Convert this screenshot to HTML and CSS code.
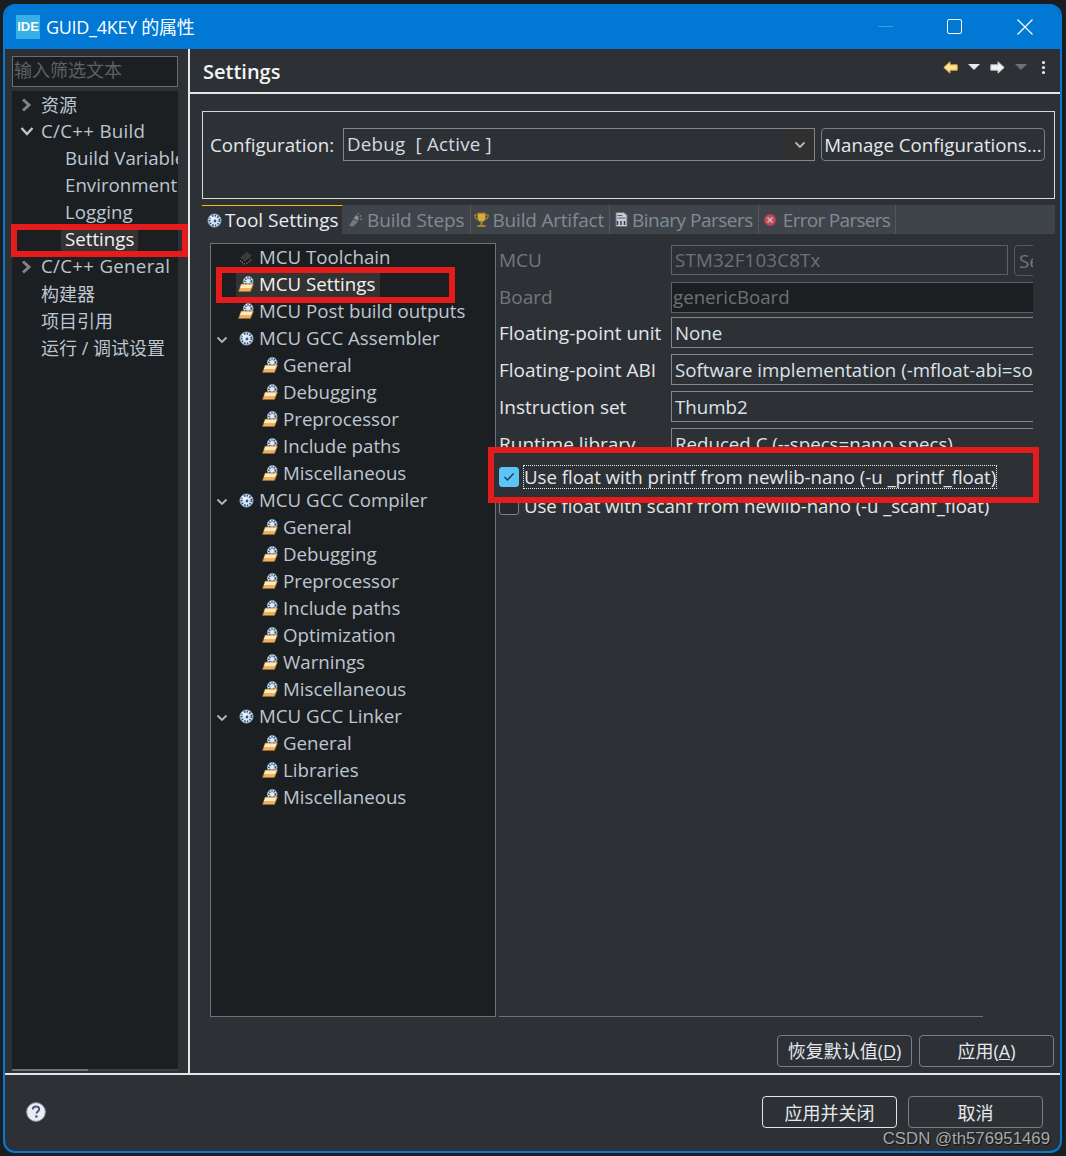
FILE: index.html
```html
<!DOCTYPE html>
<html lang="zh">
<head>
<meta charset="utf-8">
<title>GUID_4KEY 的属性</title>
<link rel="stylesheet" href="styles.css">
</head>
<body>
<svg class="defs" width="0" height="0">
  <defs>
    <symbol id="gear" viewBox="0 0 16 16">
      <circle cx="8" cy="8" r="7" fill="#dbe6f1" stroke="#7f9dba"/>
      <circle cx="8" cy="8" r="5.200" fill="none" stroke="#34557f" stroke-width="2" stroke-dasharray="1.600 1.400"/>
      <path d="M3.500 3.500l4.500 4.500" stroke="#f6f9fc" stroke-width="2"/>
      <circle cx="8.500" cy="8.500" r="1.500" fill="#34557f"/>
    </symbol>
    <symbol id="folder" viewBox="0 0 18 18">
      <circle cx="11.500" cy="6" r="5.500" fill="#e3ecf5" stroke="#86a3c0" stroke-width=".7"/>
      <circle cx="11.500" cy="6" r="3.600" fill="none" stroke="#34557f" stroke-width="2.200" stroke-dasharray="1.400 1.200"/>
      <path d="M3.500 9h14l-3.500 8.500H.6z" fill="#eeb160" stroke="#a3722f" stroke-width=".6"/>
      <path d="M3.800 9.800h12.600l-1.700 3.700H2.300z" fill="#fdeac2"/>
    </symbol>
    <symbol id="chip" viewBox="0 0 18 18">
      <path d="M2 10 10 3l6 5-8 7z" fill="#3a3a3a"/>
      <path d="M2 10v2l6 5v-2zM8 17l8-7V8l-8 7z" fill="#0c0c0c"/>
      <path d="M3 12.500v2M5 14v2M7 15.500v2M10 15v2M12.500 13v2M14.500 11v2" stroke="#8f8f8f"/>
    </symbol>
    <symbol id="chev-r" viewBox="0 0 12 14">
      <path d="M3 1.500 9 7l-6 5.500" fill="none" stroke="#7f8387" stroke-width="3"/>
    </symbol>
    <symbol id="chev-d" viewBox="0 0 14 12">
      <path d="M1.500 3 7 9l5.500-6" fill="none" stroke="#c4c7ca" stroke-width="2.400"/>
    </symbol>
    <symbol id="chev-s" viewBox="0 0 12 10">
      <path d="M1.500 2.500 6 7l4.500-4.500" fill="none" stroke="#b4b8bc" stroke-width="1.800"/>
    </symbol>
  </defs>
</svg>

<div class="window">
  <header class="titlebar">
    <span class="appicon">IDE</span>
    <span class="title">GUID_4KEY 的属性</span>
    <span class="wincontrols">
      <span class="wc-min"></span>
      <span class="wc-max"></span>
      <svg class="wc-close" width="16" height="16" viewBox="0 0 16 16"><path d="M.5.500l15 15M15.500.500l-15 15" stroke="#fff" stroke-width="1.200"/></svg>
    </span>
  </header>

  <div class="main">
    <aside class="nav">
      <div class="filter">输入筛选文本</div>
      <ul class="navtree">
        <li class="nav-row nav-zh"><svg class="twist" width="12" height="14"><use href="#chev-r"/></svg>资源</li>
        <li class="nav-row nav-cpp"><svg class="twist" width="14" height="12"><use href="#chev-d"/></svg>C/C++ Build</li>
        <li class="nav-row nav-child">Build Variables</li>
        <li class="nav-row nav-child">Environment</li>
        <li class="nav-row nav-child">Logging</li>
        <li class="nav-row nav-child nav-sel"><span>Settings</span></li>
        <li class="nav-row nav-cpp"><svg class="twist" width="12" height="14"><use href="#chev-r"/></svg>C/C++ General</li>
        <li class="nav-row nav-zh">构建器</li>
        <li class="nav-row nav-zh">项目引用</li>
        <li class="nav-row nav-zh">运行 / 调试设置</li>
      </ul>
      <div class="nav-scroll"></div>
    </aside>

    <section class="content">
      <div class="page-head">
        <h1 class="page-title">Settings</h1>
        <div class="head-tools">
          <svg width="15" height="13" viewBox="0 0 15 13"><path d="M.8 6.500 7 .8v3h7.200v5.400H7v3z" fill="#fbe3a0" stroke="#e8a92a"/></svg>
          <span class="tri tri-on"></span>
          <svg width="15" height="13" viewBox="0 0 15 13"><path d="M14.200 6.500 8 .8v3H.8v5.400H8v3z" fill="#f2f2f2" stroke="#c4c4c4"/></svg>
          <span class="tri tri-off"></span>
          <span class="dots"><i></i><i></i><i></i></span>
        </div>
      </div>

      <div class="page-body">
        <div class="config">
          <label class="config-label">Configuration:</label>
          <div class="combo"><span class="combo-text">Debug&nbsp; [ Active ]</span><span class="combo-btn"><svg width="12" height="10"><use href="#chev-s"/></svg></span></div>
          <button class="btn btn-manage">Manage Configurations...</button>
        </div>

        <nav class="tabs">
          <span class="tab tab-on"><svg width="15" height="15"><use href="#gear"/></svg>Tool Settings</span>
          <span class="tab tab-steps"><svg width="16" height="15" viewBox="0 0 16 15"><path d="M1 14 5 7.500l5 2.500-5 4.500z" fill="#737a82"/><path d="M5.500 6.500 8 3l3 2 -1 4zM9 2l1.300-.8.7 1-1.300.8zM11.500 4l1.300-1 .7 1-1.300 1zM12 7l2-.5.300 1-2 .5z" fill="#868d94"/></svg>Build Steps</span>
          <span class="tab tab-art"><svg width="15" height="16" viewBox="0 0 15 16"><path d="M3.500 1h8v5c0 3-2 4-4 4s-4-1-4-4z" fill="#d3a94a" stroke="#8a6a20"/><path d="M3.500 3H.8c0 3 1 4 3 4M11.500 3h2.700c0 3-1 4-3 4" fill="none" stroke="#b08a30" stroke-width="1.200"/><path d="M6.500 10h2v3h-2zM3.500 13h8v2h-8z" fill="#a58430"/></svg>Build Artifact</span>
          <span class="tab tab-bin"><svg width="13" height="15" viewBox="0 0 13 15"><path d="M1 .5h8l3 3V14.500H1z" fill="#c9ccd0" stroke="#6e7276"/><path d="M2.500 3.500h5M2.500 6h8" stroke="#5c6064"/><path d="M2.500 9v4M6 9v4M9.500 9v4" stroke="#1f3f6e" stroke-width="1.500"/></svg>Binary Parsers</span>
          <span class="tab tab-err"><svg width="14" height="14" viewBox="0 0 14 14"><circle cx="7" cy="7" r="6" fill="#b9505d" stroke="#8d3340"/><path d="M4.500 4.500l5 5M9.500 4.500l-5 5" stroke="#ddb7bc" stroke-width="1.400"/></svg>Error Parsers</span>
          <span class="tabs-fill"></span>
        </nav>

        <div class="tab-panel">
          <ul class="tool-tree">
            <li class="t-row t-l1"><svg class="t-ico" width="16" height="16"><use href="#chip"/></svg>MCU Toolchain</li>
            <li class="t-row t-l1 t-sel"><span class="t-selbox"><svg class="t-ico" width="16" height="16"><use href="#folder"/></svg>MCU Settings</span></li>
            <li class="t-row t-l1"><svg class="t-ico" width="16" height="16"><use href="#folder"/></svg>MCU Post build outputs</li>
            <li class="t-row"><svg class="t-twist" width="12" height="10"><use href="#chev-s"/></svg><svg class="t-gear" width="15" height="15"><use href="#gear"/></svg>MCU GCC Assembler</li>
            <li class="t-row t-l2"><svg class="t-ico" width="16" height="16"><use href="#folder"/></svg>General</li>
            <li class="t-row t-l2"><svg class="t-ico" width="16" height="16"><use href="#folder"/></svg>Debugging</li>
            <li class="t-row t-l2"><svg class="t-ico" width="16" height="16"><use href="#folder"/></svg>Preprocessor</li>
            <li class="t-row t-l2"><svg class="t-ico" width="16" height="16"><use href="#folder"/></svg>Include paths</li>
            <li class="t-row t-l2"><svg class="t-ico" width="16" height="16"><use href="#folder"/></svg>Miscellaneous</li>
            <li class="t-row"><svg class="t-twist" width="12" height="10"><use href="#chev-s"/></svg><svg class="t-gear" width="15" height="15"><use href="#gear"/></svg>MCU GCC Compiler</li>
            <li class="t-row t-l2"><svg class="t-ico" width="16" height="16"><use href="#folder"/></svg>General</li>
            <li class="t-row t-l2"><svg class="t-ico" width="16" height="16"><use href="#folder"/></svg>Debugging</li>
            <li class="t-row t-l2"><svg class="t-ico" width="16" height="16"><use href="#folder"/></svg>Preprocessor</li>
            <li class="t-row t-l2"><svg class="t-ico" width="16" height="16"><use href="#folder"/></svg>Include paths</li>
            <li class="t-row t-l2"><svg class="t-ico" width="16" height="16"><use href="#folder"/></svg>Optimization</li>
            <li class="t-row t-l2"><svg class="t-ico" width="16" height="16"><use href="#folder"/></svg>Warnings</li>
            <li class="t-row t-l2"><svg class="t-ico" width="16" height="16"><use href="#folder"/></svg>Miscellaneous</li>
            <li class="t-row"><svg class="t-twist" width="12" height="10"><use href="#chev-s"/></svg><svg class="t-gear" width="15" height="15"><use href="#gear"/></svg>MCU GCC Linker</li>
            <li class="t-row t-l2"><svg class="t-ico" width="16" height="16"><use href="#folder"/></svg>General</li>
            <li class="t-row t-l2"><svg class="t-ico" width="16" height="16"><use href="#folder"/></svg>Libraries</li>
            <li class="t-row t-l2"><svg class="t-ico" width="16" height="16"><use href="#folder"/></svg>Miscellaneous</li>
          </ul>

          <div class="form-pane">
            <div class="form">
              <div class="f-row">
                <span class="f-label f-dis">MCU</span>
                <span class="f-field f-short f-dis">STM32F103C8Tx</span>
                <span class="f-select">Se</span>
              </div>
              <div class="f-row f-board"><span class="f-label f-dis">Board</span><span class="f-field f-dark f-dis">genericBoard</span></div>
              <div class="f-row"><span class="f-label">Floating-point unit</span><span class="f-field">None</span></div>
              <div class="f-row"><span class="f-label">Floating-point ABI</span><span class="f-field">Software implementation (-mfloat-abi=soft)</span></div>
              <div class="f-row"><span class="f-label">Instruction set</span><span class="f-field">Thumb2</span></div>
              <div class="f-row"><span class="f-label">Runtime library</span><span class="f-field">Reduced C (--specs=nano.specs)</span></div>
              <div class="c-row c-scanf"><span class="cbox"></span><span class="c-text">Use float with scanf from newlib-nano (-u _scanf_float)</span></div>
            </div>
            <div class="form-rule"></div>
          </div>
        </div>

        <div class="page-actions">
          <button class="btn btn-act">恢复默认值(<u>D</u>)</button>
          <button class="btn btn-act">应用(<u>A</u>)</button>
        </div>
      </div>
    </section>
  </div>

  <footer class="footer">
    <svg class="help" width="20" height="20" viewBox="0 0 20 20"><circle cx="10" cy="10" r="9.300" fill="#e9edf3" stroke="#9aa5b8"/><path d="M6.800 7.500C6.800 5.500 8.300 4.500 10 4.500s3.200 1 3.200 2.800c0 2.200-2.700 2.300-2.700 4.200" fill="none" stroke="#47597f" stroke-width="2"/><circle cx="10.400" cy="14.500" r="1.300" fill="#47597f"/></svg>
    <div class="footer-btns">
      <button class="btn btn-foot btn-default">应用并关闭</button>
      <button class="btn btn-foot">取消</button>
    </div>
  </footer>

  <div class="mark mark-nav"></div>
  <div class="mark mark-tool"></div>
  <div class="mark mark-check">
    <div class="c-row"><span class="cbox cbox-on"><svg width="12" height="10" viewBox="0 0 12 10"><path d="M1.500 5 4.500 8l6-6.500" fill="none" stroke="#0f3a55" stroke-width="1.300"/></svg></span><span class="c-text c-focus">Use float with printf from newlib-nano (-u _printf_float)</span></div>
  </div>
  <div class="watermark">CSDN @th576951469</div>
</div>
</body>
</html>
```

FILE: styles.css
```css
* { box-sizing: border-box; }
html, body { margin: 0; padding: 0; }
body {
  width: 1066px;
  height: 1156px;
  overflow: hidden;
  background: #1b1e21;
  padding: 4px 4px 3px 3px;
  font-family: "Open Sans", "Noto Sans CJK SC", sans-serif;
  font-size: 18.7px;
  color: #bcc6d0;
}
.defs { position: absolute; }
ul { list-style: none; margin: 0; padding: 0; }

.window {
  position: relative;
  width: 1059px;
  height: 1149px;
  display: flex;
  flex-direction: column;
  background: #2d3135;
  border: 2px solid #0878d2;
  border-top: 0;
  border-radius: 12px;
  overflow: hidden;
}

.titlebar {
  height: 45px;
  flex: none;
  display: flex;
  align-items: center;
  background: #0078d4;
  color: #fff;
  padding-left: 11px;
}
.appicon {
  width: 24px;
  height: 24px;
  background: #37aee6;
  color: #fff;
  font: bold 13px/24px "Liberation Sans", sans-serif;
  text-align: center;
}
.title { margin: -2px 0 0 6px; font-size: 18px; letter-spacing: -.3px; white-space: nowrap; }
.wincontrols { margin-left: auto; display: flex; align-items: center; }
.wc-min { width: 15px; height: 1px; background: #3f9ade; margin-right: 54px; }
.wc-max { width: 15px; height: 15px; border: 1.500px solid #fff; border-radius: 2px; margin-right: 55px; }
.wc-close { margin-right: 27px; }

.main { flex: 1; display: flex; min-height: 0; }

.nav {
  width: 183px;
  flex: none;
  padding: 7px 10px 2px 7px;
  display: flex;
  flex-direction: column;
}
.filter {
  height: 31px;
  border: 1px solid #6a6d70;
  background: #1c1f22;
  color: #5d6064;
  font-size: 18px;
  padding-left: 1px;
  line-height: 27px;
  white-space: nowrap;
  flex: none;
}
.navtree {
  margin-top: 4px;
  flex: 1;
  background: #1c1f22;
  overflow: hidden;
}
.nav-row {
  height: 27px;
  line-height: 26px;
  padding-left: 29px;
  position: relative;
  white-space: nowrap;
  overflow: hidden;
}
.nav-zh { font-size: 18px; line-height: 29px; }
.nav-cpp { letter-spacing: .3px; }
.twist { position: absolute; left: 8px; top: 7px; }
.nav-child { padding-left: 53px; }
.nav-sel span { display: inline-block; color: #f2f2f2; background: #333; height: 27px; padding: 0 4px; margin-left: -4px; }
.nav-scroll { height: 2px; width: 166px; flex: none; background: linear-gradient(90deg, #6c7176 0 76px, #3a3e42 76px); }

.content { flex: 1; min-width: 0; border-left: 2px solid #e6e6e6; display: flex; flex-direction: column; }
.page-head {
  height: 45px;
  flex: none;
  display: flex;
  align-items: center;
  justify-content: space-between;
  border-bottom: 2px solid #e6e6e6;
  padding: 2px 15px 0 13px;
}
.page-title { margin: 0; font-size: 20px; font-weight: 600; color: #f4f4f4; }
.head-tools { display: flex; align-items: center; height: 20px; margin-top: -9px; }
.head-tools svg { flex: none; }
.tri { width: 0; height: 0; border-left: 6.5px solid transparent; border-right: 6.5px solid transparent; margin: 0 10px 0 10px; }
.tri-on { border-top: 6px solid #e8e8e8; }
.tri-off { border-top: 6px solid #6e7074; margin: 0; margin-left: 10px; }
.dots { display: flex; flex-direction: column; gap: 2px; margin-left: 15px; }
.dots i { width: 3px; height: 3px; border-radius: 50%; background: #eee; }

.page-body { flex: 1; display: flex; flex-direction: column; padding: 17px 5px 0 12px; min-height: 0; }

.config {
  height: 88px;
  flex: none;
  border: 1px solid #d8d8d8;
  display: flex;
  align-items: flex-start;
  padding: 16px 9px 0 7px;
}
.config-label { width: 133px; flex: none; line-height: 34px; color: #e2e6ea; white-space: nowrap; }
.combo {
  width: 472px;
  flex: none;
  height: 33px;
  border: 1px solid #85888b;
  display: flex;
  justify-content: space-between;
}
.combo-text { padding-left: 3px; line-height: 30px; letter-spacing: .25px; color: #d3dae0; }
.combo-btn { width: 28px; background: #303030; display: flex; align-items: center; justify-content: center; }
.btn {
  font: inherit;
  font-size: 18px;
  color: #e4e9ee;
  background: transparent;
  border: 1px solid #7b7e82;
  border-radius: 4px;
  padding: 0;
  white-space: nowrap;
}
.btn-manage { margin-left: 6px; width: 224px; height: 33px; font-size: 18.7px; padding-bottom: 1px; flex: none; }

.tabs { margin-top: 6px; height: 29px; flex: none; display: flex; background: #3f444a; }
.tab {
  display: flex;
  align-items: center;
  gap: 4px;
  height: 29px;
  padding: 0 5px 0 4px;
  color: #808b95;
  border-right: 1px solid #54585d;
  white-space: nowrap;
  font-size: 19px;
}
.tab-on {
  width: 141px;
  background: #2d3135;
  color: #e8ecf0;
  border-top: 1px solid #f0c000;
  border-right-color: #3f444a;
  padding: 0 0 0 5px;
  gap: 3px;
}
.tab-steps { gap: 3px; letter-spacing: -.1px; padding-left: 5px; }
.tab-art { letter-spacing: -.2px; padding-left: 3px; }
.tab-bin { letter-spacing: -.5px; padding-left: 5px; }
.tab-err { letter-spacing: -.7px; padding-left: 4px; gap: 6px; }

.tab-panel { flex: 1; min-height: 0; display: flex; padding: 0 0 0 8px; margin-top: 9px; gap: 3px; }
.tool-tree {
  width: 286px;
  height: 774px;
  flex: none;
  border: 1px solid #6f7377;
  background: #1c1f22;
  overflow: hidden;
}
.t-row {
  height: 27px;
  line-height: 26px;
  position: relative;
  padding-left: 48px;
  white-space: nowrap;
}
.t-l2 { padding-left: 72px; }
.t-ico { position: absolute; left: 27px; top: 5px; }
.t-l2 .t-ico { left: 51px; }
.t-twist { position: absolute; left: 5px; top: 10px; }
.t-gear { position: absolute; left: 28px; top: 6px; }
.t-selbox { display: inline-block; margin-left: -23px; padding-left: 23px; padding-right: 5px; background: #333; color: #f2f2f2; position: relative; height: 27px; }
.t-sel .t-ico { left: 2px; }

.form-pane { width: 534px; flex: none; display: flex; flex-direction: column; height: 774px; overflow: hidden; }
.form { flex: 1; overflow: hidden; padding-top: 2px; }
.f-row { height: 37px; display: flex; align-items: flex-start; }
.f-board { height: 35px; }
.f-label { width: 172px; flex: none; line-height: 32px; font-size: 19px; color: #e2e6ea; white-space: nowrap; }
.f-label.f-dis { color: #73777b; line-height: 30px; }
.f-field {
  flex: none;
  width: 400px;
  height: 31px;
  border: 1px solid #85888b;
  padding-left: 3px;
  line-height: 29px;
  color: #dce2e8;
  white-space: nowrap;
  overflow: hidden;
}
.f-field.f-dis { color: #6d7175; border-color: #5e6266; line-height: 27px; }
.f-short { width: 337px; height: 30px; letter-spacing: .2px; }
.f-dark { background: #1c1f22; padding-left: 1px; letter-spacing: 0; }
.f-select { flex: none; margin-left: 6px; width: 40px; height: 31px; border: 1px solid #55595d; border-radius: 4px; padding-left: 4px; line-height: 30px; color: #73777b; overflow: hidden; }
.c-row { display: flex; align-items: center; height: 26px; white-space: nowrap; color: #e2e6ea; }
.cbox { width: 20px; height: 20px; flex: none; border: 1px solid #7e8185; border-radius: 3px; margin-right: 5px; background: #26292c; display: flex; align-items: center; justify-content: center; }
.cbox-on { background: #5cc4f7; border-color: #5cc4f7; }
.c-scanf { margin-top: 27px; letter-spacing: -.09px; }
.c-focus { outline: 1px dotted #e8e8e8; line-height: 22px; letter-spacing: -.04px; }
.form-rule { height: 1px; width: 484px; background: #6c7278; flex: none; }

.page-actions { height: 50px; flex: none; display: flex; justify-content: flex-end; align-items: flex-end; gap: 7px; padding: 0 1px 6px 0; }
.btn-act { width: 135px; height: 32px; padding-bottom: 2px; }

.footer {
  height: 78px;
  flex: none;
  border-top: 2px solid #e6e6e6;
  display: flex;
  justify-content: space-between;
  padding: 21px 17px 0 21px;
}
.help { margin-top: 6px; }
.footer-btns { display: flex; gap: 11px; }
.btn-foot { width: 135px; height: 32px; }
.btn-default { border-color: #e4e4e4; }

.mark { position: absolute; border: 6px solid #e61c1c; }
.mark-nav { left: 6px; top: 220px; width: 177px; height: 33px; }
.mark-tool { left: 211px; top: 263px; width: 239px; height: 36px; }
.mark-check { left: 483px; top: 443px; width: 551px; height: 56px; background: #2d3135; padding: 11px 0 0 5px; }
.watermark {
  position: absolute;
  right: 10px;
  bottom: 2px;
  font: 16.8px "Liberation Sans", sans-serif;
  color: #a8a8a8;
  text-shadow: 1px 1px 1px #111;
}
```
